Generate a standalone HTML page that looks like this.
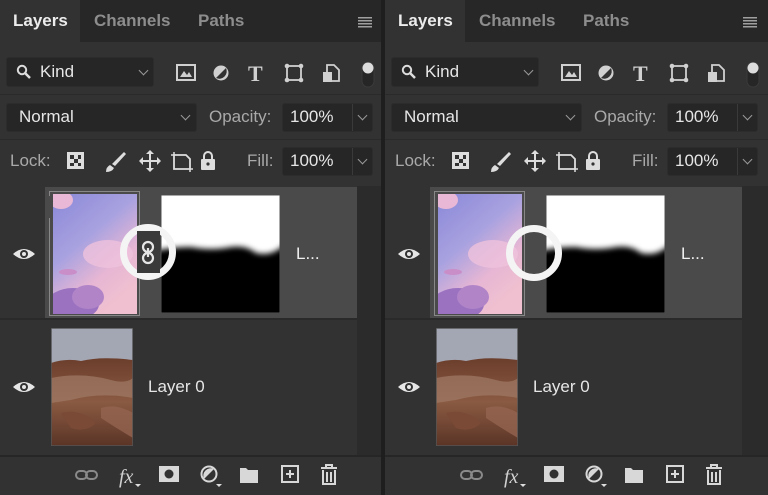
<!DOCTYPE html>
<html><head><meta charset="utf-8"><style>
*{margin:0;padding:0;box-sizing:border-box}
body{width:768px;height:495px;background:#1e1e1e;overflow:hidden;font-family:"Liberation Sans",sans-serif;position:relative}
.p{position:absolute;top:0;width:381px;height:495px;background:#323232;overflow:hidden}
.a{position:absolute}
.tabbar{left:0;top:0;width:381px;height:42px;background:#272727}
.tab{top:0;height:42px;font-weight:bold;font-size:17px;line-height:42px;color:#8d8d8d}
.fld{background:#262626;border:1px solid #2c2c2c;border-radius:3px}
.txt{color:#e6e6e6;font-size:17px}
.lbl{color:#a9a9a9;font-size:17px}
.chev{width:7px;height:7px;border-right:1.5px solid #999;border-bottom:1.5px solid #999;transform:rotate(45deg)}
.ic{fill:#d0d0d0}
</style></head><body>

<!-- PANEL TEMPLATE rendered twice -->
<div class="p" style="left:0">
 <div class="a tabbar"></div>
 <div class="a" style="left:0;top:0;width:80px;height:42px;background:#323232"></div>
 <div class="a tab" style="left:13px;color:#ececec">Layers</div>
 <div class="a tab" style="left:94px">Channels</div>
 <div class="a tab" style="left:198px">Paths</div>
 <div class="a" style="left:358px;top:17px;width:14px;height:11px;background:repeating-linear-gradient(#a0a0a0 0 1.5px,transparent 1.5px 3px)"></div>
 <!-- kind -->
 <div class="a fld" style="left:6px;top:57px;width:148px;height:30px"></div>
 <svg class="a" style="left:16px;top:64px" width="16" height="16"><circle cx="6" cy="6" r="4.2" stroke="#ddd" stroke-width="2" fill="none"/><line x1="9" y1="9" x2="14" y2="14" stroke="#ddd" stroke-width="2.5"/></svg>
 <div class="a txt" style="left:40px;top:62px">Kind</div>
 <div class="a chev" style="left:140px;top:67px"></div>
 <svg class="a" style="left:175px;top:62px" width="200" height="26">
  <rect x="2" y="3" width="18" height="15" fill="none" stroke="#d0d0d0" stroke-width="2"/><path d="M5 15 L9 9 L12 13 L14 10 L17 15Z" fill="#d0d0d0"/>
  <circle cx="46" cy="11" r="7.5" fill="#d0d0d0"/><path d="M41 16 L51 6 A7.5 7.5 0 0 1 41 16Z" fill="#323232"/>
  <text x="73" y="19" font-family="Liberation Serif" font-weight="bold" font-size="22" fill="#d0d0d0">T</text>
  <rect x="112" y="4" width="14" height="14" fill="none" stroke="#d0d0d0" stroke-width="1.8"/><g fill="#d0d0d0"><circle cx="112" cy="4" r="2.3"/><circle cx="126" cy="4" r="2.3"/><circle cx="112" cy="18" r="2.3"/><circle cx="126" cy="18" r="2.3"/></g>
  <path d="M152 3 h7 l5 5 v11 h-12z" fill="none" stroke="#d0d0d0" stroke-width="1.8"/><rect x="148" y="10" width="9" height="10" fill="#d0d0d0"/>
  <rect x="187" y="0" width="12" height="25" rx="6" fill="#262626" stroke="#3a3a3a"/><circle cx="193" cy="6" r="5.5" fill="#ddd"/>
 </svg>
 <div class="a" style="left:0;top:94px;width:381px;height:1px;background:#2a2a2a"></div>
 <!-- normal -->
 <div class="a fld" style="left:6px;top:103px;width:191px;height:29px"></div>
 <div class="a txt" style="left:19px;top:107px">Normal</div>
 <div class="a chev" style="left:182px;top:112px"></div>
 <div class="a lbl" style="left:209px;top:107px">Opacity:</div>
 <div class="a fld" style="left:282px;top:103px;width:91px;height:29px"></div>
 <div class="a" style="left:352px;top:104px;width:1px;height:27px;background:#3a3a3a"></div>
 <div class="a txt" style="left:290px;top:107px">100%</div>
 <div class="a chev" style="left:359px;top:112px"></div>
 <div class="a" style="left:0;top:139px;width:381px;height:1px;background:#2a2a2a"></div>
 <!-- lock -->
 <div class="a lbl" style="left:10px;top:151px">Lock:</div>
 <svg class="a" style="left:66px;top:150px" width="160" height="24">
  <rect x2="0" x="1" y="2" width="17" height="17" fill="#ddd"/><g fill="#323232"><rect x="4" y="5" width="4" height="4"/><rect x="12" y="5" width="3" height="4"/><rect x="8" y="9" width="4" height="4"/><rect x="4" y="13" width="4" height="3"/><rect x="12" y="13" width="3" height="3"/></g>
  <path d="M58 2 L46 14 L49 16 L60 4Z" fill="#ddd"/><path d="M44 15 Q40 17 40 22 Q46 22 48 18Z" fill="#ddd"/>
  <path d="M75 11 h18 M84 2 v18" stroke="#ddd" stroke-width="2"/><path d="M84 0 l-4 4 h8z M84 22 l-4 -4 h8z M73 11 l4 -4 v8z M95 11 l-4 -4 v8z" fill="#ddd"/>
  <path d="M108 5 h12 l4 4 v10 h-16z" fill="none" stroke="#ddd" stroke-width="1.8"/><path d="M105 5 h3 M108 2 v3 M124 19 h3 M124 19 v3" stroke="#ddd" stroke-width="1.5"/>
  <rect x="135" y="9" width="14" height="11" rx="1" fill="#ddd"/><path d="M138 9 v-3 a4 4 0 0 1 8 0 v3" fill="none" stroke="#ddd" stroke-width="2"/><circle cx="142" cy="14" r="1.6" fill="#323232"/>
 </svg>
 <div class="a lbl" style="left:247px;top:151px">Fill:</div>
 <div class="a fld" style="left:282px;top:147px;width:91px;height:29px"></div>
 <div class="a" style="left:352px;top:148px;width:1px;height:27px;background:#3a3a3a"></div>
 <div class="a txt" style="left:290px;top:151px">100%</div>
 <div class="a chev" style="left:359px;top:156px"></div>
 <!-- list -->
 <div class="a" style="left:0;top:186px;width:381px;height:270px;background:#2b2b2b"></div>
 <div class="a" style="left:0;top:186px;width:357px;height:270px;background:#323232"></div>
 <div class="a" style="left:45px;top:187px;width:312px;height:131px;background:#4a4a4a"></div>
 <div class="a" style="left:0;top:318px;width:357px;height:2px;background:#2a2a2a"></div>
 <div class="a" style="left:0;top:455px;width:381px;height:2px;background:#262626"></div>
 <svg class="a" style="left:12px;top:246px" width="24" height="16"><path d="M1 8 Q12 -2 23 8 Q12 18 1 8Z" fill="#e6e6e6"/><circle cx="12" cy="8" r="4" fill="#323232"/><circle cx="12" cy="8" r="2" fill="#e6e6e6"/></svg>
 <svg class="a" style="left:12px;top:379px" width="24" height="16"><path d="M1 8 Q12 -2 23 8 Q12 18 1 8Z" fill="#e6e6e6"/><circle cx="12" cy="8" r="4" fill="#323232"/><circle cx="12" cy="8" r="2" fill="#e6e6e6"/></svg>
 <!-- sky thumb -->
 <div class="a" style="left:49px;top:191px;width:91px;height:125px;border:1.5px solid #888"></div>
 <div class="a" style="left:49px;top:196px;width:3px;height:22px;background:#4a4a4a"></div>
 <svg class="a" style="left:53px;top:194px" width="84" height="120">
  <defs><linearGradient id="sk" x1="0" y1="0" x2="0.6" y2="1"><stop offset="0" stop-color="#8a88d8"/><stop offset="0.45" stop-color="#a9a2e0"/><stop offset="0.75" stop-color="#e6b6d4"/><stop offset="1" stop-color="#f0c0d0"/></linearGradient></defs>
  <rect width="84" height="120" fill="url(#sk)"/>
  <ellipse cx="8" cy="6" rx="12" ry="9" fill="#e8b8d6"/>
  <ellipse cx="55" cy="60" rx="25" ry="14" fill="#efc2dc" opacity=".8"/>
  <ellipse cx="20" cy="110" rx="26" ry="16" fill="#9a72c0"/><ellipse cx="35" cy="103" rx="16" ry="12" fill="#b184c8"/>
  <ellipse cx="15" cy="78" rx="9" ry="3" fill="#c98ec8"/>
 </svg>
 <!-- mask -->
 <svg class="a" style="left:161px;top:195px" width="119" height="118">
  <defs><filter id="bl"><feGaussianBlur stdDeviation="3"/></filter></defs>
  <rect width="119" height="118" fill="#000"/>
  <path d="M-5 -5 H125 V48 Q112 62 95 58 Q85 50 70 52 Q50 56 30 52 Q10 52 -5 56Z" fill="#fff" filter="url(#bl)"/>
  <rect width="119" height="118" fill="none" stroke="#555" stroke-width="1"/>
 </svg>
 <!-- link circle -->
 <div class="a" style="left:120px;top:224px;width:56px;height:56px;border-radius:50%;border:7px solid #f4f4f4"></div>
 <div class="a" style="left:137px;top:231px;width:23px;height:42px;background:#3a3a3a"></div>
 <svg class="a" style="left:140px;top:240px" width="16" height="26"><rect x="3" y="2" width="10" height="10" rx="5" fill="none" stroke="#e6e6e6" stroke-width="2.2"/><rect x="3" y="13" width="10" height="10" rx="5" fill="none" stroke="#e6e6e6" stroke-width="2.2"/><line x1="8" y1="8" x2="8" y2="17" stroke="#e6e6e6" stroke-width="2.2"/></svg>
 <div class="a txt" style="left:296px;top:244px;color:#f0f0f0">L...</div>
 <!-- mountain -->
 <svg class="a" style="left:51px;top:328px" width="82" height="118">
  <defs><linearGradient id="mt" x1="0" y1="0" x2="0" y2="1"><stop offset="0" stop-color="#6b3e2c"/><stop offset=".5" stop-color="#8a5a42"/><stop offset="1" stop-color="#5a3426"/></linearGradient></defs>
  <rect width="82" height="118" fill="#a3a6b3"/>
  <path d="M0 35 Q15 30 30 33 Q50 28 82 32 V118 H0Z" fill="url(#mt)"/>
  <path d="M0 50 Q30 44 60 52 Q75 56 82 50 V70 Q50 64 20 72 L0 75Z" fill="#a07a66" opacity=".7"/>
  <path d="M10 85 Q30 80 45 95 Q35 105 20 100Z" fill="#7a4a36"/>
  <path d="M50 80 Q65 75 82 85 V110 Q65 100 50 90Z" fill="#946450" opacity=".8"/>
  <rect width="82" height="118" fill="none" stroke="#555" stroke-width="1.5"/>
 </svg>
 <div class="a txt" style="left:148px;top:377px">Layer 0</div>
 <!-- bottom -->
 <svg class="a" style="left:70px;top:462px" width="280" height="30">
  <g fill="none" stroke="#8a8a8a" stroke-width="2"><rect x="6" y="9" width="11" height="8" rx="4"/><rect x="16" y="9" width="11" height="8" rx="4"/></g>
  <text x="49" y="21" font-family="Liberation Serif" font-style="italic" font-size="20" fill="#d0d0d0">fx</text><path d="M65 22 h6 l-3 3z" fill="#ddd"/>
  <rect x="89" y="4" width="20" height="16" fill="#d8d8d8"/><circle cx="99" cy="12" r="4.5" fill="#323232"/>
  <circle cx="139" cy="12" r="7.5" fill="none" stroke="#d8d8d8" stroke-width="2"/><path d="M134 17 L144 7 A7.5 7.5 0 0 0 134 17Z" fill="#d8d8d8"/><path d="M146 22 h6 l-3 3z" fill="#ddd"/>
  <path d="M170 6 h6 l2 2 h10 v13 h-18z" fill="#d8d8d8"/>
  <rect x="212" y="4" width="16" height="16" fill="none" stroke="#d8d8d8" stroke-width="2"/><path d="M220 8 v8 M216 12 h8" stroke="#d8d8d8" stroke-width="2"/>
  <path d="M251 6 h16 M256 6 v-3 h6 v3 M253 8 v14 h12 v-14 M257 10 v10 M261 10 v10" fill="none" stroke="#d8d8d8" stroke-width="2"/>
 </svg>
</div>

<div class="p" style="left:385px;width:383px">
 <div class="a tabbar" style="width:383px"></div>
 <div class="a" style="left:0;top:0;width:80px;height:42px;background:#323232"></div>
 <div class="a tab" style="left:13px;color:#ececec">Layers</div>
 <div class="a tab" style="left:94px">Channels</div>
 <div class="a tab" style="left:198px">Paths</div>
 <div class="a" style="left:358px;top:17px;width:14px;height:11px;background:repeating-linear-gradient(#a0a0a0 0 1.5px,transparent 1.5px 3px)"></div>
 <div class="a fld" style="left:6px;top:57px;width:148px;height:30px"></div>
 <svg class="a" style="left:16px;top:64px" width="16" height="16"><circle cx="6" cy="6" r="4.2" stroke="#ddd" stroke-width="2" fill="none"/><line x1="9" y1="9" x2="14" y2="14" stroke="#ddd" stroke-width="2.5"/></svg>
 <div class="a txt" style="left:40px;top:62px">Kind</div>
 <div class="a chev" style="left:140px;top:67px"></div>
 <svg class="a" style="left:175px;top:62px" width="200" height="26">
  <rect x="2" y="3" width="18" height="15" fill="none" stroke="#d0d0d0" stroke-width="2"/><path d="M5 15 L9 9 L12 13 L14 10 L17 15Z" fill="#d0d0d0"/>
  <circle cx="46" cy="11" r="7.5" fill="#d0d0d0"/><path d="M41 16 L51 6 A7.5 7.5 0 0 1 41 16Z" fill="#323232"/>
  <text x="73" y="19" font-family="Liberation Serif" font-weight="bold" font-size="22" fill="#d0d0d0">T</text>
  <rect x="112" y="4" width="14" height="14" fill="none" stroke="#d0d0d0" stroke-width="1.8"/><g fill="#d0d0d0"><circle cx="112" cy="4" r="2.3"/><circle cx="126" cy="4" r="2.3"/><circle cx="112" cy="18" r="2.3"/><circle cx="126" cy="18" r="2.3"/></g>
  <path d="M152 3 h7 l5 5 v11 h-12z" fill="none" stroke="#d0d0d0" stroke-width="1.8"/><rect x="148" y="10" width="9" height="10" fill="#d0d0d0"/>
  <rect x="187" y="0" width="12" height="25" rx="6" fill="#262626" stroke="#3a3a3a"/><circle cx="193" cy="6" r="5.5" fill="#ddd"/>
 </svg>
 <div class="a" style="left:0;top:94px;width:383px;height:1px;background:#2a2a2a"></div>
 <div class="a fld" style="left:6px;top:103px;width:191px;height:29px"></div>
 <div class="a txt" style="left:19px;top:107px">Normal</div>
 <div class="a chev" style="left:182px;top:112px"></div>
 <div class="a lbl" style="left:209px;top:107px">Opacity:</div>
 <div class="a fld" style="left:282px;top:103px;width:91px;height:29px"></div>
 <div class="a" style="left:352px;top:104px;width:1px;height:27px;background:#3a3a3a"></div>
 <div class="a txt" style="left:290px;top:107px">100%</div>
 <div class="a chev" style="left:359px;top:112px"></div>
 <div class="a" style="left:0;top:139px;width:383px;height:1px;background:#2a2a2a"></div>
 <div class="a lbl" style="left:10px;top:151px">Lock:</div>
 <svg class="a" style="left:66px;top:150px" width="160" height="24">
  <rect x="1" y="2" width="17" height="17" fill="#ddd"/><g fill="#323232"><rect x="4" y="5" width="4" height="4"/><rect x="12" y="5" width="3" height="4"/><rect x="8" y="9" width="4" height="4"/><rect x="4" y="13" width="4" height="3"/><rect x="12" y="13" width="3" height="3"/></g>
  <path d="M58 2 L46 14 L49 16 L60 4Z" fill="#ddd"/><path d="M44 15 Q40 17 40 22 Q46 22 48 18Z" fill="#ddd"/>
  <path d="M75 11 h18 M84 2 v18" stroke="#ddd" stroke-width="2"/><path d="M84 0 l-4 4 h8z M84 22 l-4 -4 h8z M73 11 l4 -4 v8z M95 11 l-4 -4 v8z" fill="#ddd"/>
  <path d="M108 5 h12 l4 4 v10 h-16z" fill="none" stroke="#ddd" stroke-width="1.8"/><path d="M105 5 h3 M108 2 v3 M124 19 h3 M124 19 v3" stroke="#ddd" stroke-width="1.5"/>
  <rect x="135" y="9" width="14" height="11" rx="1" fill="#ddd"/><path d="M138 9 v-3 a4 4 0 0 1 8 0 v3" fill="none" stroke="#ddd" stroke-width="2"/><circle cx="142" cy="14" r="1.6" fill="#323232"/>
 </svg>
 <div class="a lbl" style="left:247px;top:151px">Fill:</div>
 <div class="a fld" style="left:282px;top:147px;width:91px;height:29px"></div>
 <div class="a" style="left:352px;top:148px;width:1px;height:27px;background:#3a3a3a"></div>
 <div class="a txt" style="left:290px;top:151px">100%</div>
 <div class="a chev" style="left:359px;top:156px"></div>
 <div class="a" style="left:0;top:186px;width:383px;height:270px;background:#2b2b2b"></div>
 <div class="a" style="left:0;top:186px;width:357px;height:270px;background:#323232"></div>
 <div class="a" style="left:45px;top:187px;width:312px;height:131px;background:#4a4a4a"></div>
 <div class="a" style="left:0;top:318px;width:357px;height:2px;background:#2a2a2a"></div>
 <div class="a" style="left:0;top:455px;width:383px;height:2px;background:#262626"></div>
 <svg class="a" style="left:12px;top:246px" width="24" height="16"><path d="M1 8 Q12 -2 23 8 Q12 18 1 8Z" fill="#e6e6e6"/><circle cx="12" cy="8" r="4" fill="#323232"/><circle cx="12" cy="8" r="2" fill="#e6e6e6"/></svg>
 <svg class="a" style="left:12px;top:379px" width="24" height="16"><path d="M1 8 Q12 -2 23 8 Q12 18 1 8Z" fill="#e6e6e6"/><circle cx="12" cy="8" r="4" fill="#323232"/><circle cx="12" cy="8" r="2" fill="#e6e6e6"/></svg>
 <div class="a" style="left:49px;top:191px;width:91px;height:125px;border:1.5px solid #888"></div>
 <svg class="a" style="left:53px;top:194px" width="84" height="120">
  <defs><linearGradient id="sk2" x1="0" y1="0" x2="0.6" y2="1"><stop offset="0" stop-color="#8a88d8"/><stop offset="0.45" stop-color="#a9a2e0"/><stop offset="0.75" stop-color="#e6b6d4"/><stop offset="1" stop-color="#f0c0d0"/></linearGradient></defs>
  <rect width="84" height="120" fill="url(#sk2)"/>
  <ellipse cx="8" cy="6" rx="12" ry="9" fill="#e8b8d6"/>
  <ellipse cx="55" cy="60" rx="25" ry="14" fill="#efc2dc" opacity=".8"/>
  <ellipse cx="20" cy="110" rx="26" ry="16" fill="#9a72c0"/><ellipse cx="35" cy="103" rx="16" ry="12" fill="#b184c8"/>
  <ellipse cx="15" cy="78" rx="9" ry="3" fill="#c98ec8"/>
 </svg>
 <svg class="a" style="left:161px;top:195px" width="119" height="118">
  <defs><filter id="bl2"><feGaussianBlur stdDeviation="3"/></filter></defs>
  <rect width="119" height="118" fill="#000"/>
  <path d="M-5 -5 H125 V48 Q112 62 95 58 Q85 50 70 52 Q50 56 30 52 Q10 52 -5 56Z" fill="#fff" filter="url(#bl2)"/>
  <rect width="119" height="118" fill="none" stroke="#555" stroke-width="1"/>
 </svg>
 <div class="a" style="left:121px;top:225px;width:56px;height:56px;border-radius:50%;border:7px solid #f4f4f4"></div>
 <div class="a txt" style="left:296px;top:244px;color:#f0f0f0">L...</div>
 <svg class="a" style="left:51px;top:328px" width="82" height="118">
  <defs><linearGradient id="mt2" x1="0" y1="0" x2="0" y2="1"><stop offset="0" stop-color="#6b3e2c"/><stop offset=".5" stop-color="#8a5a42"/><stop offset="1" stop-color="#5a3426"/></linearGradient></defs>
  <rect width="82" height="118" fill="#a3a6b3"/>
  <path d="M0 35 Q15 30 30 33 Q50 28 82 32 V118 H0Z" fill="url(#mt2)"/>
  <path d="M0 50 Q30 44 60 52 Q75 56 82 50 V70 Q50 64 20 72 L0 75Z" fill="#a07a66" opacity=".7"/>
  <path d="M10 85 Q30 80 45 95 Q35 105 20 100Z" fill="#7a4a36"/>
  <path d="M50 80 Q65 75 82 85 V110 Q65 100 50 90Z" fill="#946450" opacity=".8"/>
  <rect width="82" height="118" fill="none" stroke="#555" stroke-width="1.5"/>
 </svg>
 <div class="a txt" style="left:148px;top:377px">Layer 0</div>
 <svg class="a" style="left:70px;top:462px" width="280" height="30">
  <g fill="none" stroke="#8a8a8a" stroke-width="2"><rect x="6" y="9" width="11" height="8" rx="4"/><rect x="16" y="9" width="11" height="8" rx="4"/></g>
  <text x="49" y="21" font-family="Liberation Serif" font-style="italic" font-size="20" fill="#d0d0d0">fx</text><path d="M65 22 h6 l-3 3z" fill="#ddd"/>
  <rect x="89" y="4" width="20" height="16" fill="#d8d8d8"/><circle cx="99" cy="12" r="4.5" fill="#323232"/>
  <circle cx="139" cy="12" r="7.5" fill="none" stroke="#d8d8d8" stroke-width="2"/><path d="M134 17 L144 7 A7.5 7.5 0 0 0 134 17Z" fill="#d8d8d8"/><path d="M146 22 h6 l-3 3z" fill="#ddd"/>
  <path d="M170 6 h6 l2 2 h10 v13 h-18z" fill="#d8d8d8"/>
  <rect x="212" y="4" width="16" height="16" fill="none" stroke="#d8d8d8" stroke-width="2"/><path d="M220 8 v8 M216 12 h8" stroke="#d8d8d8" stroke-width="2"/>
  <path d="M251 6 h16 M256 6 v-3 h6 v3 M253 8 v14 h12 v-14 M257 10 v10 M261 10 v10" fill="none" stroke="#d8d8d8" stroke-width="2"/>
 </svg>
</div>
</body></html>
